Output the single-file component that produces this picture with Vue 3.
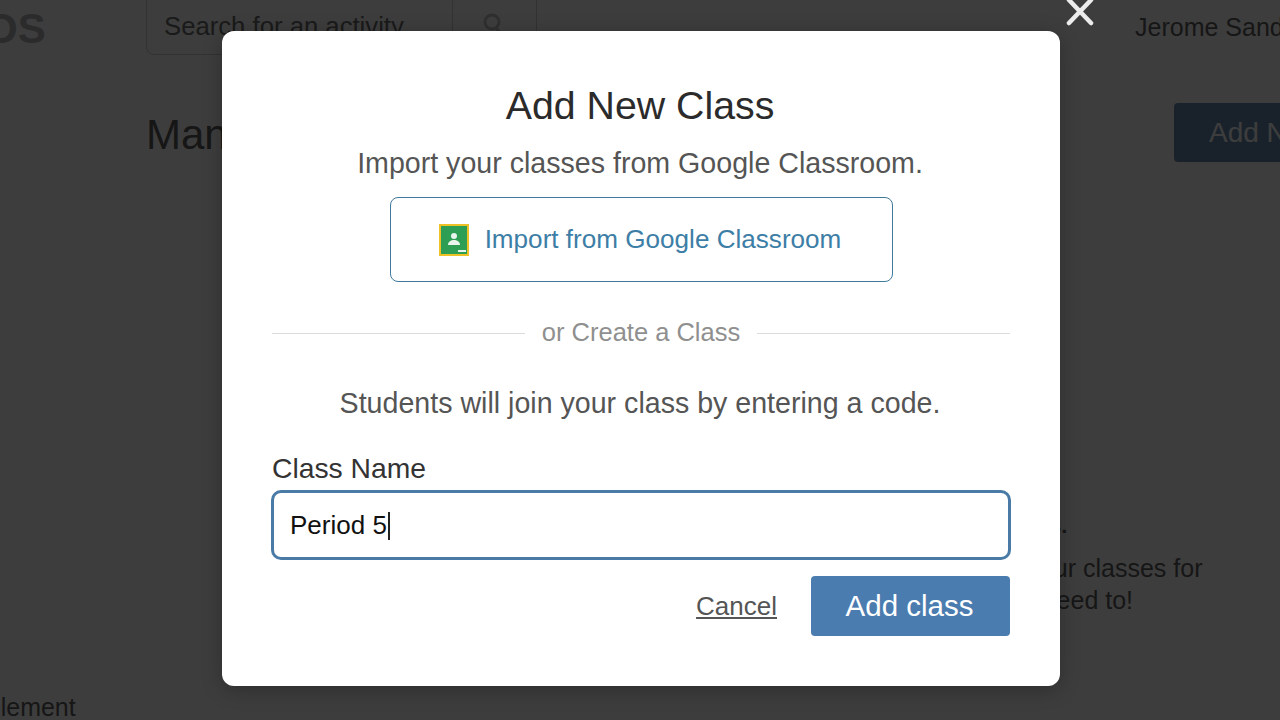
<template>
  <div class="page">
    <header class="topbar">
      <div class="logo">OS</div>
      <div class="search">
        <span class="search-text">Search for an activity</span>
        <span class="search-btn">
          <svg width="26" height="26" viewBox="0 0 26 26" fill="none" stroke="#c4c4c4" stroke-width="3">
            <circle cx="12" cy="10" r="7" />
            <path d="M16 16l6 7" />
          </svg>
        </span>
      </div>
      <div class="user">Jerome Sanders</div>
    </header>

    <div class="title-row">
      <h1>Manage Classes</h1>
      <button class="add-btn">Add New Class</button>
    </div>

    <div class="empty">
      <strong>Classes.</strong>
      <span>Add your classes for</span>
      <span>if you need to!</span>
    </div>

    <div class="footer-text">Implement</div>

    <div class="overlay">
      <div class="modal">
        <button class="close" aria-label="Close">
          <svg width="30" height="30" viewBox="0 0 30 30" stroke="#ececec" stroke-width="4.500" stroke-linecap="round">
            <path d="M4 3l22 23M26 3L4 26" />
          </svg>
        </button>
        <h2>Add New Class</h2>
        <p class="sub">Import your classes from Google Classroom.</p>
        <button class="import-btn">
          <svg width="30" height="32" viewBox="0 0 30 32">
            <rect x="1" y="1" width="28" height="30" fill="#2f9e55" stroke="#eec227" stroke-width="2" />
            <circle cx="15" cy="12" r="3" fill="#e8f5ec" />
            <path d="M9 21c0-3.500 3-5 6-5s6 1.500 6 5z" fill="#e8f5ec" />
            <rect x="19" y="26" width="8" height="2" fill="#e8f5ec" />
          </svg>
          <span>Import from Google Classroom</span>
        </button>
        <div class="divider"><span>or Create a Class</span></div>
        <p class="students">Students will join your class by entering a code.</p>
        <label class="field-label">Class Name</label>
        <div class="input">Period 5<i class="caret"></i></div>
        <div class="actions">
          <a class="cancel">Cancel</a>
          <button class="submit">Add class</button>
        </div>
      </div>
    </div>
  </div>
</template>

<script setup>
</script>

<style>
body {
  margin: 0;
  overflow: hidden;
}
</style>

<style scoped>
.page {
  position: relative;
  display: flex;
  flex-direction: column;
  width: 1280px;
  height: 720px;
  overflow: hidden;
  background: #fff;
  color: #5e5e5e;
  font-family: "Liberation Sans", Arial, sans-serif;
}

.topbar {
  display: flex;
  height: 55px;
}

.logo {
  width: 146px;
  margin-left: -15px;
  margin-right: 15px;
  padding-top: 5px;
  font-size: 42px;
  font-weight: 700;
  color: #b4b4b4;
  box-sizing: border-box;
  flex-shrink: 0;
}

.search {
  display: flex;
  align-items: center;
  width: 391px;
  height: 70px;
  margin-top: -15px;
  padding-left: 17px;
  border: 1px solid #d0d0d0;
  border-radius: 8px;
  box-sizing: border-box;
  font-size: 25.700px;
  color: #6e6e6e;
  flex-shrink: 0;
}

.search-text {
  flex: 1;
  padding-top: 12px;
}

.search-btn {
  display: flex;
  align-items: center;
  justify-content: center;
  width: 84px;
  height: 100%;
  padding: 10px 4px 0 0;
  box-sizing: border-box;
  border-left: 1px solid #d0d0d0;
}

.user {
  margin-left: auto;
  padding-top: 13px;
  font-size: 25px;
  width: 145px;
  white-space: nowrap;
}

.title-row {
  display: flex;
  align-items: flex-start;
  height: 250px;
  padding-top: 48px;
  padding-left: 146px;
}

.title-row h1 {
  margin: 0;
  padding-top: 8px;
  font-size: 42px;
  font-weight: 400;
}

.add-btn {
  margin-left: auto;
  margin-right: -60px;
  width: 166px;
  height: 59px;
  flex-shrink: 0;
  padding: 0 0 0 35px;
  border: none;
  border-radius: 4px;
  background: #688fb4;
  color: #fff;
  font: 400 28px "Liberation Sans", Arial, sans-serif;
  text-align: left;
  white-space: nowrap;
  overflow: hidden;
}

.empty {
  display: flex;
  flex-direction: column;
  margin-top: 157px;
  padding-left: 976px;
  font-size: 25px;
  line-height: 32px;
  white-space: nowrap;
}

.empty strong {
  margin: 0 0 10px 2px;
  font-size: 22px;
}

.footer-text {
  margin-top: auto;
  margin-left: -41px;
  font-size: 25px;
  line-height: 26px;
}

.overlay {
  position: absolute;
  inset: 0;
  display: flex;
  justify-content: center;
  align-items: flex-start;
  padding: 31px 0 0 2px;
  background: rgba(0, 0, 0, 0.76);
}

.modal {
  position: relative;
  display: flex;
  flex-direction: column;
  width: 838px;
  height: 655px;
  padding: 51px 50px 0;
  box-sizing: border-box;
  border-radius: 12px;
  background: #fff;
  box-shadow: 0 4px 20px rgba(0, 0, 0, 0.25);
}

.close {
  position: absolute;
  top: -34px;
  right: -35px;
  padding: 0;
  border: none;
  background: none;
  line-height: 0;
}

h2 {
  margin: 0;
  padding-right: 2px;
  font-size: 39.300px;
  line-height: 46px;
  font-weight: 400;
  color: #2b2b2b;
  text-align: center;
}

.sub {
  margin: 19px 0 0;
  padding-right: 2px;
  font-size: 28.600px;
  line-height: 32px;
  color: #555;
  text-align: center;
}

.import-btn {
  display: flex;
  align-items: center;
  justify-content: center;
  gap: 16px;
  width: 503px;
  height: 85px;
  margin: 18px 0 0 118px;
  padding: 0 3px 0 0;
  border: 1px solid #3f7a9c;
  border-radius: 8px;
  background: #fff;
  color: #3d7ea6;
  font: 400 26.100px "Liberation Sans", Arial, sans-serif;
}

.divider {
  display: flex;
  align-items: center;
  gap: 17px;
  margin-top: 35px;
  font-size: 25.500px;
  line-height: 30px;
  color: #8f8f8f;
}

.divider::before,
.divider::after {
  content: "";
  flex: 1;
  height: 1px;
  margin-top: 3px;
  background: #dcdcdc;
}

.students {
  margin: 40px 0 0;
  padding-right: 2px;
  font-size: 28.600px;
  line-height: 32px;
  color: #555;
  text-align: center;
}

.field-label {
  margin-top: 33px;
  font-size: 28.300px;
  line-height: 32px;
  color: #333;
}

.input {
  display: flex;
  align-items: center;
  height: 70px;
  margin: 6px -1px 0 -1px;
  padding: 1px 0 0 16px;
  border: 3px solid #4a7ba6;
  border-radius: 10px;
  box-sizing: border-box;
  font-size: 26px;
  color: #111;
}

.caret {
  width: 2px;
  height: 28px;
  margin-left: 1px;
  background: #222;
}

.actions {
  display: flex;
  align-items: center;
  justify-content: flex-end;
  gap: 34px;
  margin-top: 16px;
}

.cancel {
  font-size: 26px;
  color: #555;
  text-decoration: underline;
}

.submit {
  width: 199px;
  height: 60px;
  padding: 0 2px 0 0;
  border: none;
  border-radius: 4px;
  background: #4a7cb0;
  color: #fff;
  font: 400 29.500px "Liberation Sans", Arial, sans-serif;
}
</style>
